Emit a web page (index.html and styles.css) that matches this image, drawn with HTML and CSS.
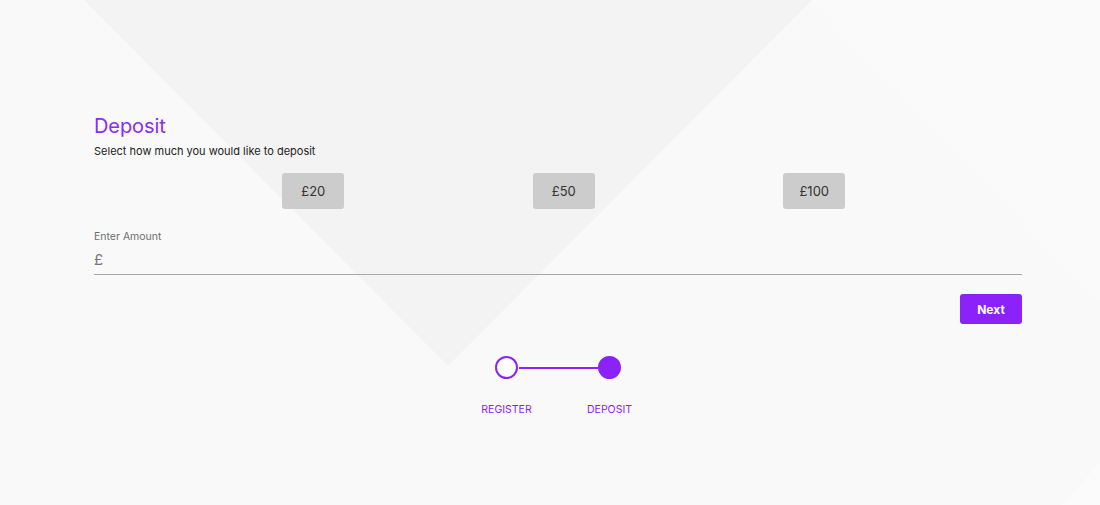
FILE: index.html
```html
<!DOCTYPE html>
<html lang="en">
<head>
<meta charset="utf-8">
<title>Deposit</title>
<link rel="stylesheet" href="styles.css">
</head>
<body>
<main class="page">
  <h1 class="title">Deposit</h1>
  <p class="subtitle">Select how much you would like to deposit</p>
  <div class="amounts">
    <div class="amount-cell"><button class="amount-btn">£20</button></div>
    <div class="amount-cell"><button class="amount-btn">£50</button></div>
    <div class="amount-cell"><button class="amount-btn">£100</button></div>
  </div>
  <div class="field">
    <label class="field-label">Enter Amount</label>
    <div class="field-input"><span class="currency">£</span></div>
  </div>
  <div class="actions">
    <button class="next-btn">Next</button>
  </div>
  <div class="stepper">
    <div class="step">
      <span class="dot dot-empty"></span>
      <span class="step-label">REGISTER</span>
    </div>
    <span class="connector"></span>
    <div class="step">
      <span class="dot dot-full"></span>
      <span class="step-label">DEPOSIT</span>
    </div>
  </div>
</main>
</body>
</html>
```
FILE: styles.css
```css
html, body {
  margin: 0;
  height: 100%;
}
body {
  background-color: #f9f9f9;
  background-image: url("data:image/svg+xml,%3Csvg xmlns='http://www.w3.org/2000/svg' width='1100' height='505'%3E%3Cpolygon points='812,0 1100,0 1100,300' fill='%23fafafa'/%3E%3Cpolygon points='1100,462 1100,505 1062,505' fill='%23fbfbfb'/%3E%3Cpolygon points='84,0 812,0 448,366' fill='%23f3f3f3'/%3E%3C/svg%3E");
  background-repeat: no-repeat;
  font-family: Inter, "Noto Sans", Arial, sans-serif;
  color: #222;
}
.page {
  box-sizing: border-box;
  width: 1100px;
  padding: 113px 78px 0 94px;
}
.title {
  margin: 0;
  font-size: 20px;
  line-height: 26px;
  font-weight: 400;
  color: #8b2cf0;
  letter-spacing: -0.1px;
}
.subtitle {
  margin: 5px 0 0;
  font-size: 11px;
  line-height: 15px;
  color: #222;
}
.amounts {
  display: grid;
  grid-template-columns: repeat(3, 250.5px);
  margin: 14px 0 0 94px;
}
.amount-cell {
  display: flex;
  justify-content: center;
}
.amount-btn {
  width: 62px;
  height: 36px;
  border: 0;
  border-radius: 3px;
  background: #cccccc;
  font-family: inherit;
  font-size: 13px;
  color: #333;
  padding: 0;
}
.field {
  margin-top: 21px;
}
.field-label {
  display: block;
  font-size: 10.5px;
  line-height: 14px;
  color: #6f6f6f;
}
.field-input {
  height: 30px;
  border-bottom: 1px solid #a8a8a8;
  display: flex;
  align-items: center;
}
.currency {
  font-size: 15px;
  color: #777;
}
.actions {
  display: flex;
  justify-content: flex-end;
  margin-top: 19px;
}
.next-btn {
  width: 62px;
  height: 30px;
  border: 0;
  border-radius: 3px;
  background: #8b22fa;
  color: #fff;
  font-family: inherit;
  font-size: 12px;
  font-weight: 700;
  padding: 0;
}
.stepper {
  display: flex;
  justify-content: center;
  align-items: flex-start;
  margin: 32px 0 0;
}
.step {
  display: flex;
  flex-direction: column;
  align-items: center;
  width: 24px;
}
.dot {
  box-sizing: border-box;
  width: 23px;
  height: 23px;
  border-radius: 50%;
  border: 2px solid #8b22fa;
}
.dot-empty {
  background: #fff;
}
.dot-full {
  background: #8b22fa;
}
.connector {
  width: 79px;
  height: 2px;
  margin-top: 11px;
  background: #8b22fa;
}
.step-label {
  margin-top: 24px;
  font-size: 10.5px;
  line-height: 14px;
  color: #8b22fa;
  white-space: nowrap;
}
```
